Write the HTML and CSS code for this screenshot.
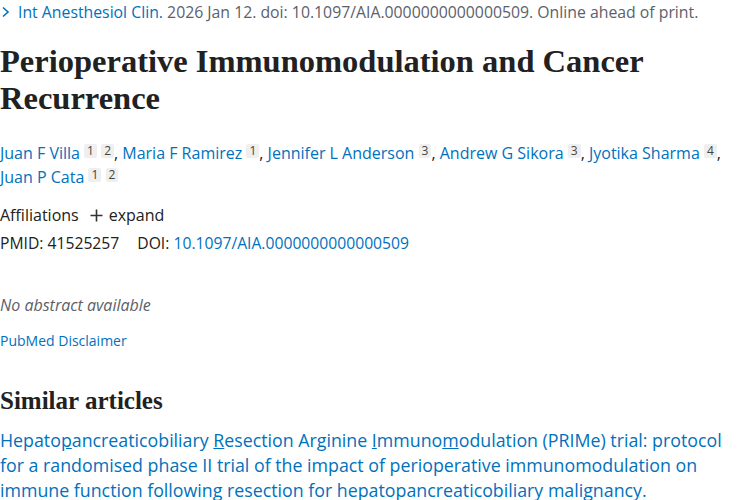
FILE: index.html
```html
<!DOCTYPE html>
<html lang="en">
<head>
    <meta charset="UTF-8">
    <title>Perioperative Immunomodulation and Cancer Recurrence - PubMed</title>
    <link rel="stylesheet" href="styles.css">
</head>
<body>
    <main class="article">
        <div class="cit">
            <a href="#" class="journal">
                <svg class="chevron" width="9" height="12" viewBox="0 0 9 12"><path d="M2 1.5 L7 6 L2 10.5" fill="none" stroke="#0071bc" stroke-width="1.6"/></svg>Int Anesthesiol Clin.</a>
            <span class="cit-rest">2026 Jan 12. doi: 10.1097/AIA.0000000000000509. Online ahead of print.</span>
        </div>

        <h1 class="title">Perioperative Immunomodulation and Cancer Recurrence</h1>

        <div class="authors">
            <a href="#">Juan F Villa</a> <sup class="aff"><a href="#">1</a></sup> <sup class="aff"><a href="#">2</a></sup>,
            <a href="#">Maria F Ramirez</a> <sup class="aff"><a href="#">1</a></sup>,
            <a href="#">Jennifer L Anderson</a> <sup class="aff"><a href="#">3</a></sup>,
            <a href="#">Andrew G Sikora</a> <sup class="aff"><a href="#">3</a></sup>,
            <a href="#">Jyotika Sharma</a> <sup class="aff"><a href="#">4</a></sup>,
            <a href="#">Juan P Cata</a> <sup class="aff"><a href="#">1</a></sup> <sup class="aff"><a href="#">2</a></sup>
        </div>

        <div class="affiliations">
            <span>Affiliations</span>
            <button class="expand">
                <svg width="13" height="13" viewBox="0 0 13 13"><path d="M6.5 0.5 V12.5 M0.5 6.5 H12.5" stroke="#333" stroke-width="1.6"/></svg>
                expand
            </button>
        </div>

        <div class="ids">
            <span>PMID: 41525257</span>
            <span>DOI: <a href="#">10.1097/AIA.0000000000000509</a></span>
        </div>

        <p class="empty-abstract">No abstract available</p>

        <a href="#" class="disclaimer">PubMed Disclaimer</a>

        <section class="similar">
            <h2>Similar articles</h2>
            <a href="#" class="similar-title">Hepato<u>p</u>ancreaticobiliary <u>R</u>esection Arginine <u>I</u>mmuno<u>m</u>odulation (PRIMe) trial: protocol<br>
                for a randomised phase II trial of the impact of perioperative immunomodulation on<br>
                immune function following resection for hepatopancreaticobiliary malignancy.</a>
        </section>
    </main>
</body>
</html>
```

FILE: styles.css
```css
body {
    margin: 0;
    background: #fff;
    color: #212121;
    font-family: "Open Sans", "Noto Sans", sans-serif;
}

a {
    color: #0071bc;
    text-decoration: none;
}

.article {
    width: 740px;
}

.cit {
    font-size: 15.8px;
    line-height: 24px;
    color: #5b616b;
}

.chevron {
    margin-left: 1px;
    margin-right: 8px;
}

.title {
    font-family: "Liberation Serif", serif;
    font-weight: bold;
    font-size: 32.5px;
    line-height: 37px;
    margin: 19px 0 0;
}

.authors {
    font-size: 16px;
    line-height: 24px;
    margin-top: 24px;
}

.aff {
    font-size: 12px;
    vertical-align: 4px;
    line-height: 1;
}

.aff a {
    display: inline-block;
    background: #efefef;
    color: #444;
    padding: 1px 3px;
    border-radius: 2px;
}

.affiliations {
    display: flex;
    align-items: center;
    gap: 11px;
    font-size: 16px;
    margin-top: 14px;
    line-height: 24px;
}

.expand {
    display: flex;
    align-items: center;
    gap: 6px;
    background: none;
    border: 0;
    padding: 0;
    font: inherit;
    color: #212121;
}

.ids {
    display: flex;
    gap: 18px;
    font-size: 15.7px;
    line-height: 24px;
    margin-top: 4px;
}

.empty-abstract {
    font-style: italic;
    color: #5b616b;
    font-size: 16px;
    line-height: 24px;
    margin: 38px 0 0;
}

.disclaimer {
    display: block;
    font-size: 14px;
    line-height: 20px;
    margin-top: 14px;
}

.similar h2 {
    font-family: "Liberation Serif", serif;
    font-weight: bold;
    font-size: 25px;
    line-height: 30px;
    margin: 35px 0 0;
}

.similar-title {
    display: block;
    font-size: 17.8px;
    line-height: 25px;
    margin-top: 12px;
}
```
